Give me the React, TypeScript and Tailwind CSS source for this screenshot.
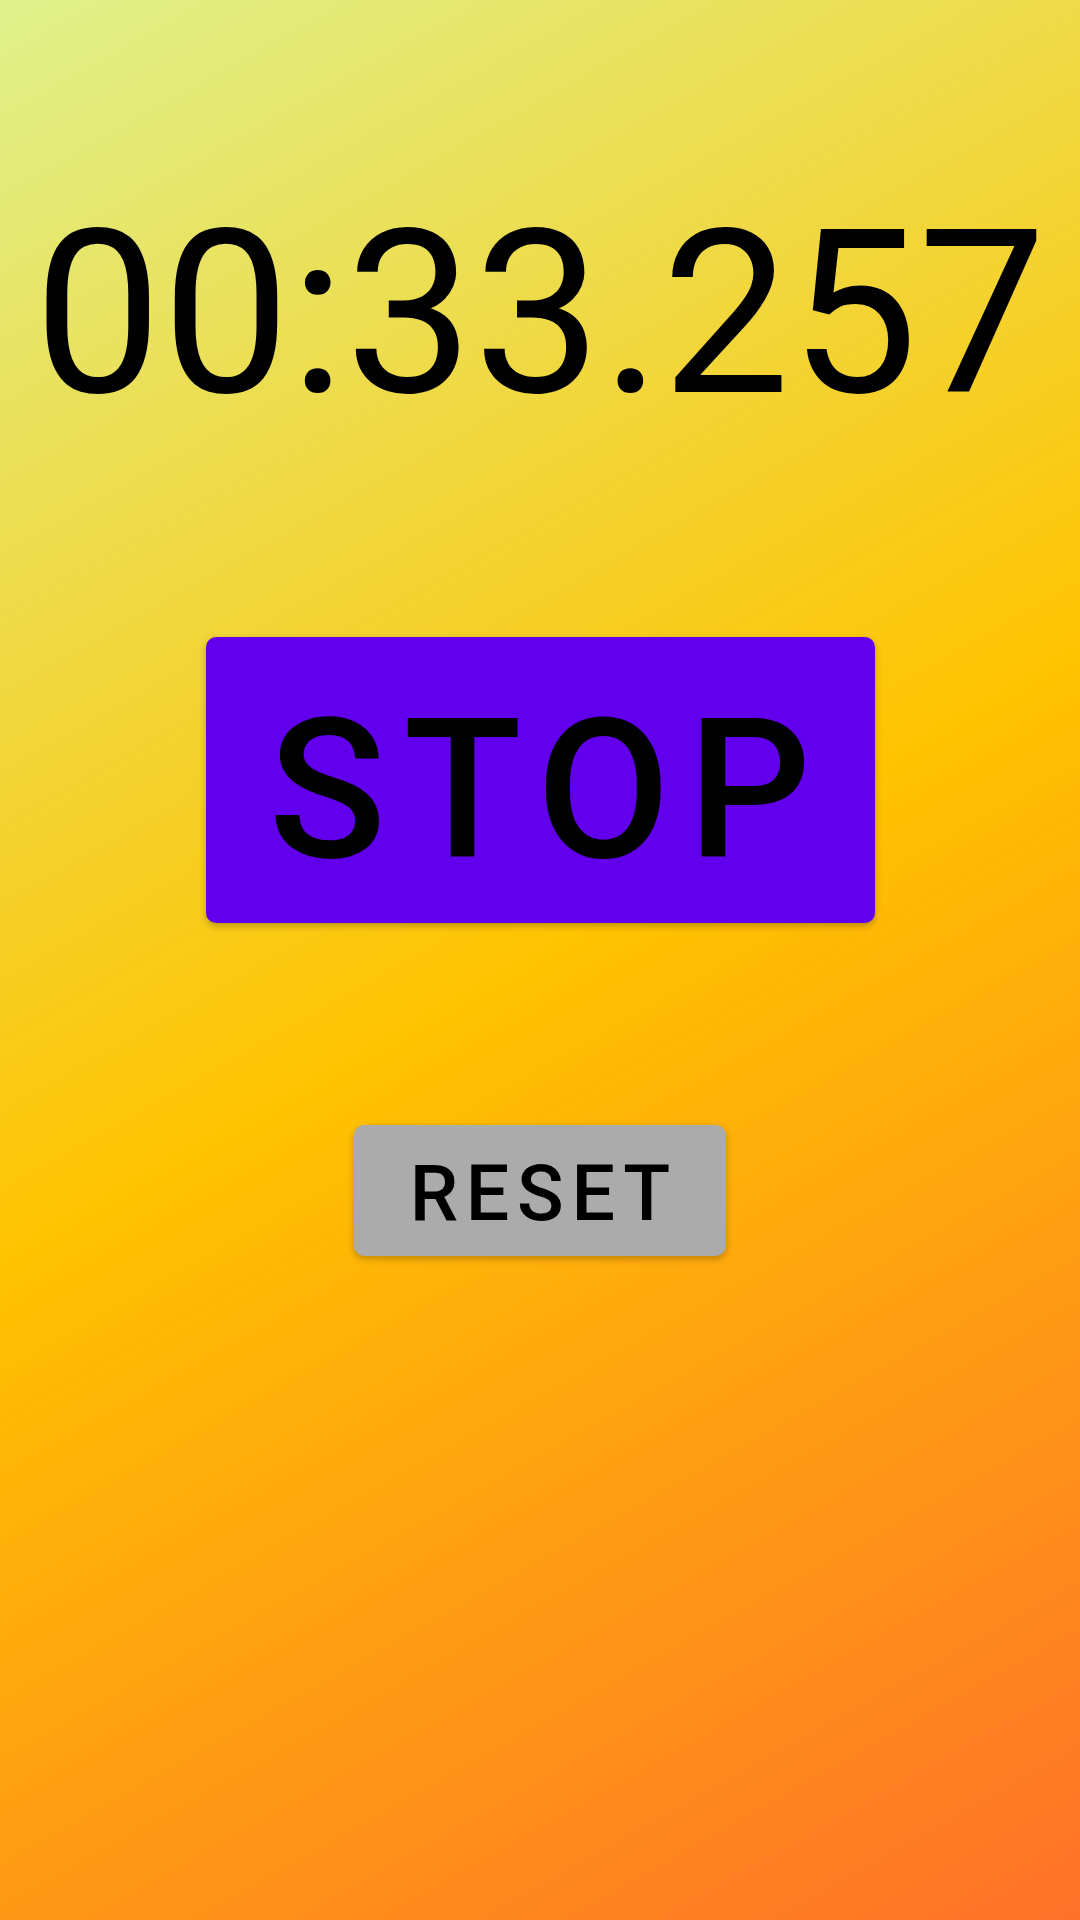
import React, { useState } from "react";

function formatTime(ms: number) {
  const m = Math.floor(ms / 60000);
  const s = Math.floor((ms % 60000) / 1000);
  const rest = ms % 1000;
  return `${String(m).padStart(2, "0")}:${String(s).padStart(2, "0")}.${String(rest).padStart(3, "0")}`;
}

export default function App() {
  const [elapsed, setElapsed] = useState<number>(33257);
  const [running, setRunning] = useState<boolean>(true);

  return (
    <div
      className="w-[1080px] h-[1920px] flex flex-col items-center bg-[linear-gradient(150.6deg,#dff18c_0%,#ffc300_50%,#ff7129_100%)]"
      style={{ fontFamily: "Roboto, 'Noto Sans', sans-serif" }}
    >
      <div className="mt-[200px] text-[228px] leading-none text-black whitespace-nowrap">
        {formatTime(elapsed)}
      </div>

      <button
        type="button"
        onClick={() => setRunning((r) => !r)}
        className="mt-[209px] w-[669px] h-[286px] pt-[57px] pl-[0.09em] flex justify-center items-start rounded-[10px] bg-[#6200ee] text-black font-medium text-[194px] leading-none tracking-[0.09em] shadow-[0_3px_7px_rgba(0,0,0,0.25)]"
      >
        {running ? "STOP" : "START"}
      </button>

      <button
        type="button"
        onClick={() => setElapsed(0)}
        className="mt-[202px] w-[372px] h-[131px] pt-[31px] pl-[0.1em] flex justify-center items-start rounded-[10px] bg-[#ababab] text-black font-medium text-[77px] leading-none tracking-[0.1em] shadow-[0_3px_7px_rgba(0,0,0,0.25)]"
      >
        RESET
      </button>
    </div>
  );
}
